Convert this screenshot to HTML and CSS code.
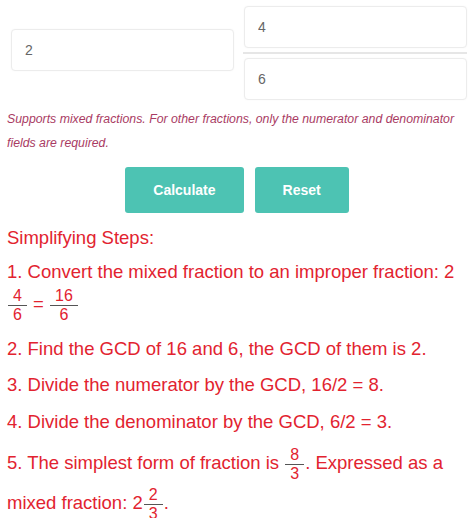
FILE: index.html
```html
<!DOCTYPE html>
<html lang="en">
<head>
<meta charset="utf-8">
<title>Simplify Fractions</title>
<link rel="stylesheet" href="styles.css">
</head>
<body>
<div class="page">
  <div class="inputs">
    <div class="whole">
      <input class="field" type="text" value="2">
    </div>
    <div class="fraction-inputs">
      <input class="field" type="text" value="4">
      <div class="divider"></div>
      <input class="field" type="text" value="6">
    </div>
  </div>
  <p class="note">Supports mixed fractions. For other fractions, only the numerator and denominator fields are required.</p>
  <div class="actions">
    <button class="btn" type="button">Calculate</button>
    <button class="btn" type="button">Reset</button>
  </div>
  <div class="result">
    <h2 class="title">Simplifying Steps:</h2>
    <p class="step">1. Convert the mixed fraction to an improper fraction: 2 <span class="frac"><span class="num">4</span><span class="den">6</span></span> = <span class="frac"><span class="num">16</span><span class="den">6</span></span></p>
    <p class="step">2. Find the GCD of 16 and 6, the GCD of them is 2.</p>
    <p class="step">3. Divide the numerator by the GCD, 16/2 = 8.</p>
    <p class="step">4. Divide the denominator by the GCD, 6/2 = 3.</p>
    <p class="step">5. The simplest form of fraction is <span class="frac"><span class="num">8</span><span class="den">3</span></span>. Expressed as a mixed fraction: 2<span class="frac"><span class="num">2</span><span class="den">3</span></span>.</p>
  </div>
</div>
</body>
</html>
```

FILE: styles.css
```css
html, body {
  margin: 0;
  padding: 0;
  background: #ffffff;
}

body {
  font-family: "Liberation Sans", Arial, sans-serif;
}

.page {
  padding: 6px 7px 0 7px;
}

.inputs {
  display: flex;
  gap: 10px;
  padding-left: 4px;
}

.whole {
  flex: 1;
  align-self: center;
  margin-bottom: 7px;
}

.fraction-inputs {
  flex: 1;
  display: flex;
  flex-direction: column;
}

.field {
  display: block;
  box-sizing: border-box;
  width: 100%;
  height: 42px;
  margin: 0;
  padding: 0 13px;
  border: 1px solid #ececec;
  border-radius: 4px;
  box-shadow: 0 0 2px rgba(0, 0, 0, 0.04);
  background: #ffffff;
  font-family: "Liberation Sans", Arial, sans-serif;
  font-size: 14px;
  color: #666666;
  outline: none;
}

.divider {
  height: 2px;
  margin: 4px 0 4px -1px;
  background: #e6e6e6;
}

.note {
  margin: 7px 0 0 0;
  font-size: 12.3px;
  line-height: 24px;
  font-style: italic;
  color: #a93b63;
}

.actions {
  display: flex;
  justify-content: center;
  gap: 11px;
  margin-top: 12px;
}

.btn {
  height: 46px;
  padding: 0 28px;
  border: none;
  border-radius: 3px;
  background: #4dc3b3;
  color: #ffffff;
  font-family: "Liberation Sans", Arial, sans-serif;
  font-size: 14px;
  font-weight: bold;
}

.result {
  margin-top: 11px;
  color: #e2232f;
}

.title {
  margin: 0;
  font-size: 18.5px;
  line-height: 27px;
  font-weight: normal;
}

.step {
  margin: 7px 0 0 0;
  font-size: 18.5px;
  line-height: 27px;
}

.step + .step {
  margin-top: 9.5px;
}

.frac {
  display: inline-flex;
  flex-direction: column;
  align-items: center;
  vertical-align: middle;
  margin: 0 1px;
  padding: 1.5px 0;
  font-size: 16px;
  line-height: 18px;
}

.num {
  padding: 0 5px;
  border-bottom: 1px solid #555555;
}

.den {
  padding: 0 5px;
}
```
